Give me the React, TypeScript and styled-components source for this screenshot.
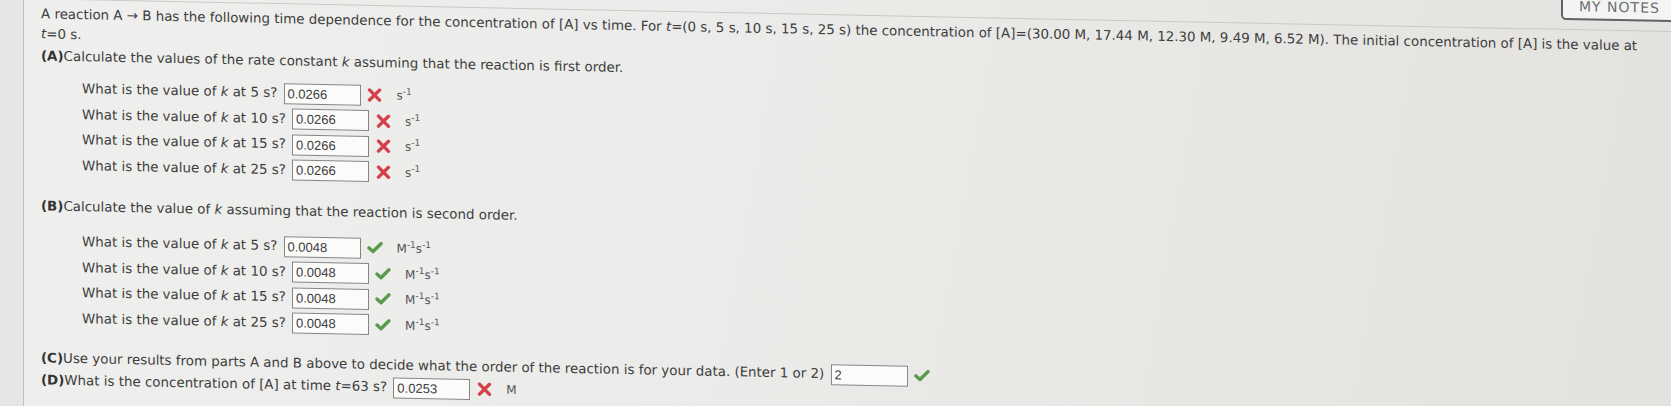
import React from "react";
import styled, { createGlobalStyle } from "styled-components";

type Mark = "wrong" | "right";

interface Question {
  t: number;
  value: string;
}

const firstOrder: Question[] = [
  { t: 5, value: "0.0266" },
  { t: 10, value: "0.0266" },
  { t: 15, value: "0.0266" },
  { t: 25, value: "0.0266" },
];

const secondOrder: Question[] = [
  { t: 5, value: "0.0048" },
  { t: 10, value: "0.0048" },
  { t: 15, value: "0.0048" },
  { t: 25, value: "0.0048" },
];

const GlobalStyle = createGlobalStyle`
  html, body {
    margin: 0;
    padding: 0;
  }
  body {
    font-family: "DejaVu Sans", Verdana, sans-serif;
    color: #3d3d3d;
    overflow: hidden;
  }
`;

const Page = styled.div`
  display: flex;
  width: 1671px;
  height: 406px;
  overflow: hidden;
  background: linear-gradient(100deg, #efefed 0%, #ebebe9 45%, #e3e2df 100%);
`;

const Gutter = styled.div`
  width: 23px;
  flex-shrink: 0;
  background: #e6e6e4;
  border-right: 1px solid #c2c2c0;
`;

const Main = styled.div`
  flex: 1;
  display: flex;
  flex-direction: column;
  padding-left: 17px;
  font-size: 13.4px;
  transform: skewY(1.15deg);
  transform-origin: 0 0;
`;

const TopBar = styled.div`
  height: 40px;
  margin: -42px 0 0 -17px;
  display: flex;
  justify-content: flex-end;
  align-items: flex-end;
  border-bottom: 1px solid #c9c9c7;
`;

const NotesButton = styled.button`
  box-sizing: border-box;
  width: 122px;
  height: 48px;
  margin: 0 -12px 9px 0;
  padding: 0 0 5px 16px;
  border: 2px solid #606366;
  border-radius: 0 0 0 5px;
  background: #f4f4f2;
  color: #6a6e72;
  font-family: "DejaVu Sans", Verdana, sans-serif;
  font-size: 14px;
  letter-spacing: 1px;
  display: flex;
  align-items: flex-end;
  justify-content: flex-start;
  line-height: 1;
`;

const Intro = styled.p`
  margin: 5px 0 0;
  width: 1612px;
  line-height: 20px;
`;

const Heading = styled.div<{ $gap: number }>`
  margin-top: ${(p) => p.$gap}px;
  line-height: 20px;
`;

const Tag = styled.b`
  font-weight: bold;
  color: #333;
`;

const QuestionList = styled.div<{ $gap: number }>`
  margin-top: ${(p) => p.$gap}px;
  padding-left: 41px;
`;

const Row = styled.div<{ $height?: number }>`
  height: ${(p) => p.$height ?? 25.5}px;
  line-height: ${(p) => p.$height ?? 25.5}px;
  white-space: nowrap;
`;

const Answer = styled.span`
  box-sizing: border-box;
  display: inline-block;
  vertical-align: middle;
  width: 77px;
  height: 21px;
  margin-left: 2px;
  padding-left: 3px;
  border: 1px solid #858585;
  background: #fbfbfa;
  font-family: "Liberation Sans", Arial, sans-serif;
  font-size: 13px;
  line-height: 19px;
  color: #404040;
`;

const MarkBox = styled.span`
  display: inline-block;
  vertical-align: middle;
  width: 16px;
  height: 14px;
  margin-left: 6px;
  line-height: 0;
  text-align: center;
`;

const Unit = styled.span`
  display: inline-block;
  margin-left: 14px;
  font-size: 12px;
  color: #555;
  sup {
    font-size: 9px;
    line-height: 0;
    vertical-align: 5px;
  }
`;

const CheckMark = ({ kind }: { kind: Mark }) =>
  kind === "wrong" ? (
    <svg width="15" height="14" viewBox="0 0 15 14">
      <path
        d="M2.5 2 L12.5 12 M12.5 2 L2.5 12"
        stroke="#d6404a"
        strokeWidth="3.4"
        strokeLinecap="round"
      />
    </svg>
  ) : (
    <svg width="16" height="13" viewBox="0 0 16 13">
      <path
        d="M2 7 L6 10.5 L14 2.5"
        fill="none"
        stroke="#5a9b4b"
        strokeWidth="3.4"
        strokeLinecap="round"
        strokeLinejoin="round"
      />
    </svg>
  );

const K = () => <i>k</i>;

const PerSecond = () => (
  <Unit>
    s<sup>-1</sup>
  </Unit>
);

const PerMolarSecond = () => (
  <Unit>
    M<sup>-1</sup>s<sup>-1</sup>
  </Unit>
);

const App = () => {
  return (
    <>
      <GlobalStyle />
      <Page>
        <Gutter />
        <Main>
          <TopBar>
            <NotesButton>MY NOTES</NotesButton>
          </TopBar>
          <Intro>
            A reaction A → B has the following time dependence for the
            concentration of [A] vs time. For <i>t</i>=(0 s, 5 s, 10 s, 15 s, 25
            s) the concentration of [A]=(30.00 M, 17.44 M, 12.30 M, 9.49 M, 6.52
            M). The initial concentration of [A] is the value at <i>t</i>=0 s.
          </Intro>

          <Heading $gap={2}>
            <Tag>(A)</Tag>Calculate the values of the rate constant <K />{" "}
            assuming that the reaction is first order.
          </Heading>
          <QuestionList $gap={9}>
            {firstOrder.map((q) => (
              <Row key={q.t}>
                What is the value of <K /> at {q.t} s? <Answer>{q.value}</Answer>
                <MarkBox>
                  <CheckMark kind="wrong" />
                </MarkBox>
                <PerSecond />
              </Row>
            ))}
          </QuestionList>

          <Heading $gap={19}>
            <Tag>(B)</Tag>Calculate the value of <K /> assuming that the
            reaction is second order.
          </Heading>
          <QuestionList $gap={12}>
            {secondOrder.map((q) => (
              <Row key={q.t}>
                What is the value of <K /> at {q.t} s? <Answer>{q.value}</Answer>
                <MarkBox>
                  <CheckMark kind="right" />
                </MarkBox>
                <PerMolarSecond />
              </Row>
            ))}
          </QuestionList>

          <Heading $gap={17}>
            <Row $height={22}>
              <Tag>(C)</Tag>Use your results from parts A and B above to decide
              what the order of the reaction is for your data. (Enter 1 or 2){" "}
              <Answer>2</Answer>
              <MarkBox>
                <CheckMark kind="right" />
              </MarkBox>
            </Row>
            <Row $height={22}>
              <Tag>(D)</Tag>What is the concentration of [A] at time <i>t</i>=63
              s? <Answer>0.0253</Answer>
              <MarkBox>
                <CheckMark kind="wrong" />
              </MarkBox>
              <Unit>M</Unit>
            </Row>
          </Heading>
        </Main>
      </Page>
    </>
  );
};

export default App;
